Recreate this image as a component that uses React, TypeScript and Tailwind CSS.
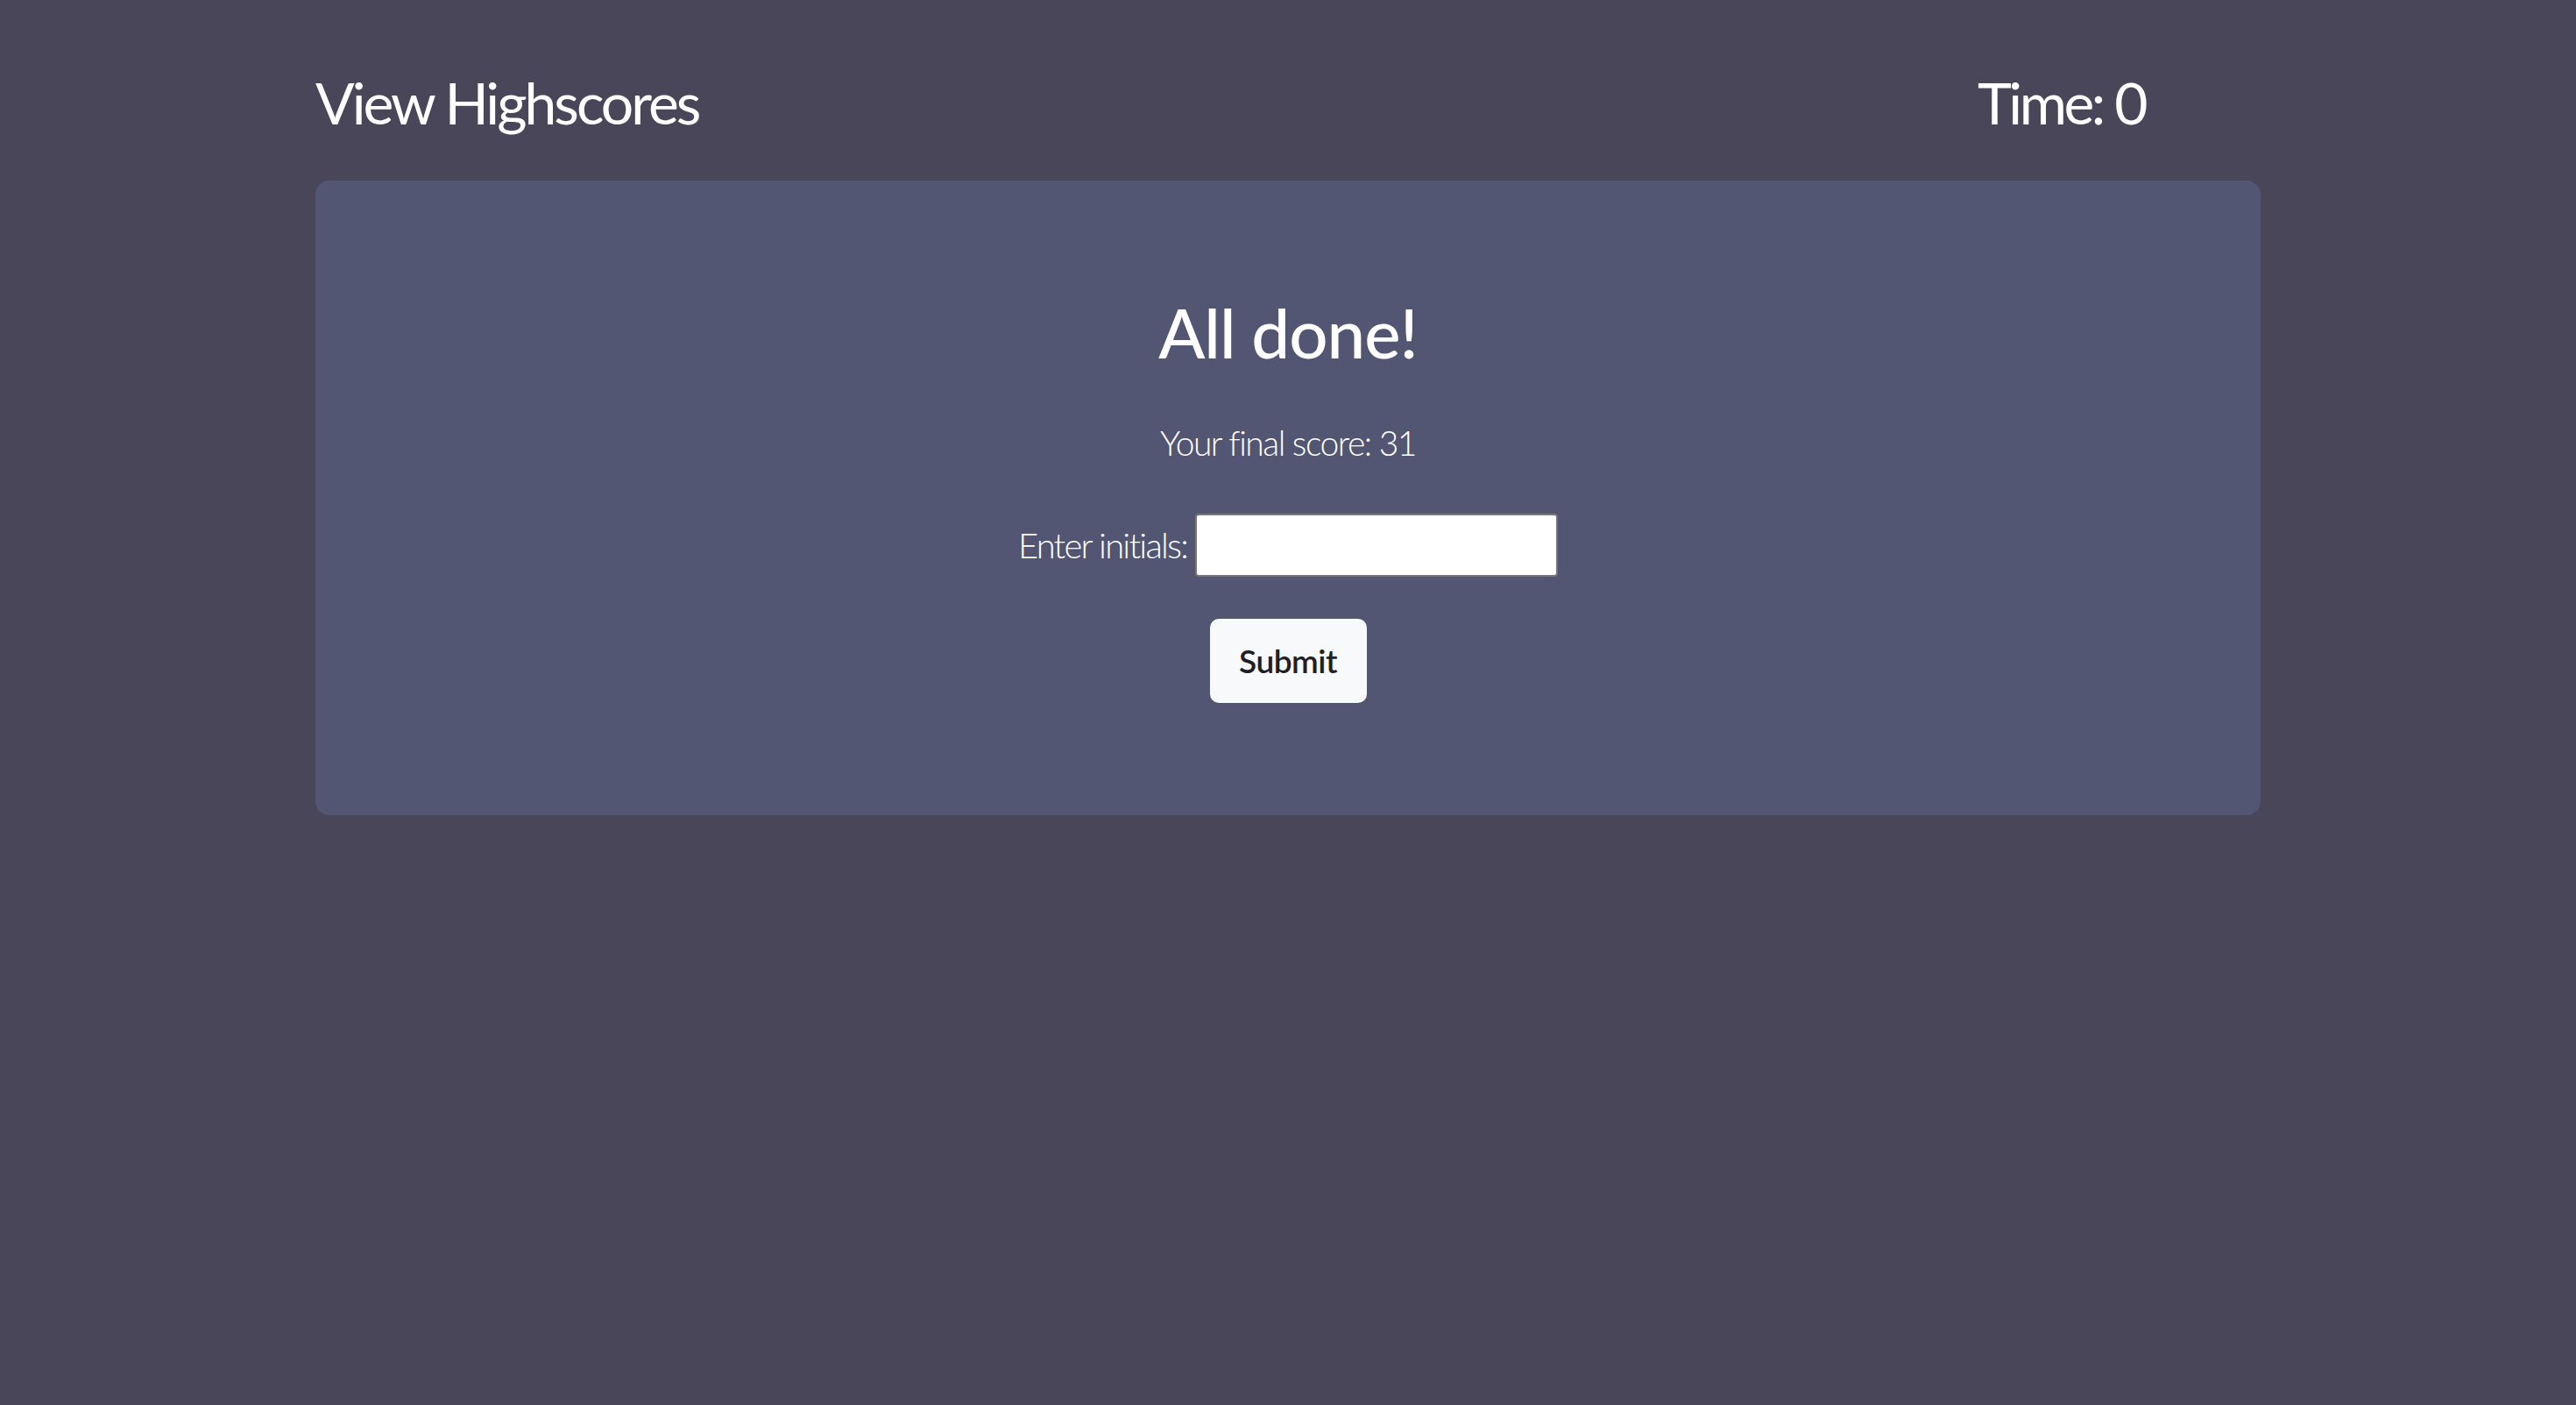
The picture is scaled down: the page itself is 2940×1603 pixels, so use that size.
export default function App() {
  return (
    <div className="min-h-screen w-full bg-[#494659] font-['Lato','Noto_Sans',sans-serif] text-white">
      <div className="mx-auto w-[2220px] pt-[84px]">
        <header className="flex items-start justify-between pr-[132px] text-[66px] leading-none">
          <a href="#" className="tracking-[-3px]">
            View Highscores
          </a>
          <span className="tracking-[-3.5px]">Time: 0</span>
        </header>

        <main className="mt-[56px] flex h-[724px] flex-col items-center rounded-[16px] bg-[#535672] pt-[134px]">
          <h1 className="text-[78px] leading-none font-medium tracking-[-1px]">All done!</h1>
          <p className="mt-[68px] text-[39px] leading-none font-light tracking-[-1.5px]">
            Your final score: 31
          </p>
          <form className="mt-[61px] flex flex-col items-center">
            <label className="flex items-center gap-[9px] text-[40px] leading-none font-light">
              <span className="tracking-[-1.8px]">Enter initials:</span>
              <input
                type="text"
                className="h-[72px] w-[414px] rounded-[4px] border-2 border-[#767676] bg-white px-3 text-[36px] text-black outline-none"
              />
            </label>
            <button
              type="button"
              className="mt-[48px] h-[96px] w-[179px] rounded-[10px] bg-[#f8f9fa] text-[37px] font-semibold tracking-[-0.5px] text-[#1f1f25]"
            >
              Submit
            </button>
          </form>
        </main>
      </div>
    </div>
  );
}
